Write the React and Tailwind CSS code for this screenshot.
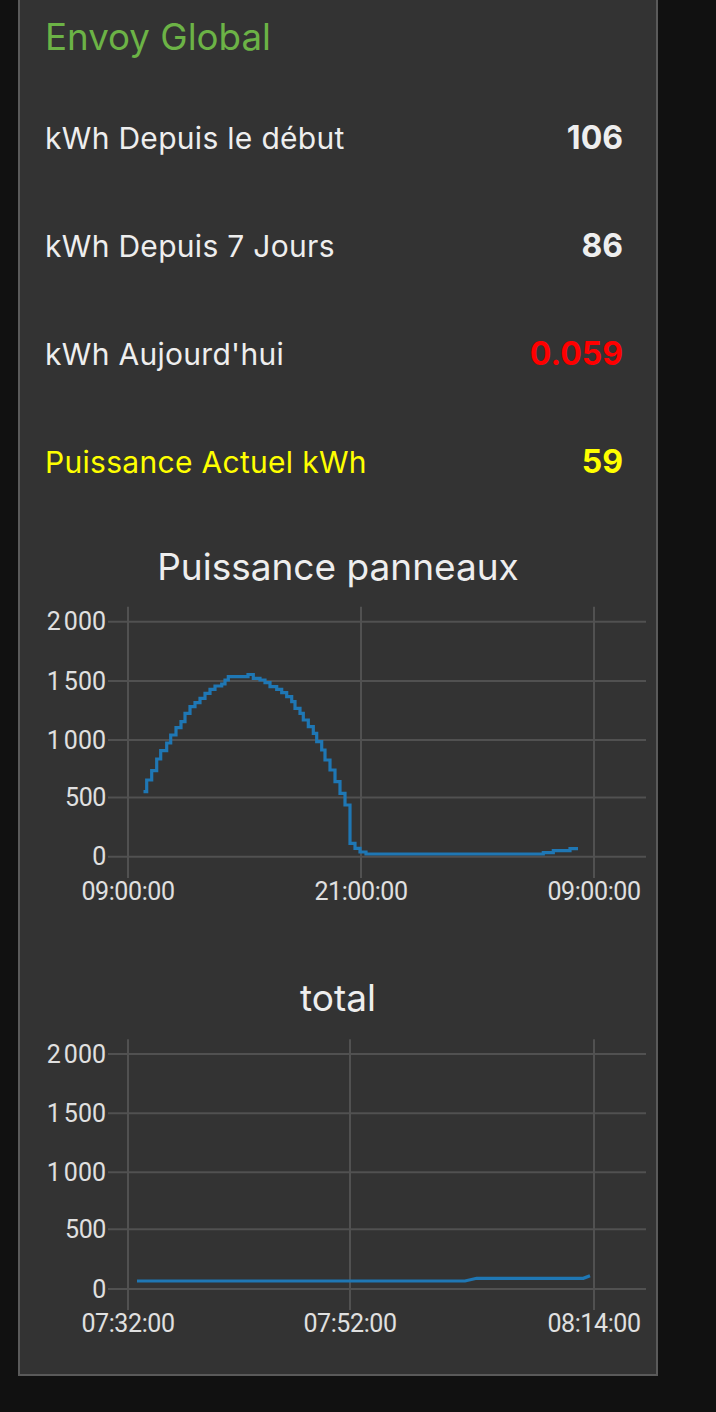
const rows = [
  { label: "kWh Depuis le début", value: "106", color: "text-[#eeeeee]" },
  { label: "kWh Depuis 7 Jours", value: "86", color: "text-[#eeeeee]" },
  { label: "kWh Aujourd'hui", value: "0.059", color: "text-[#eeeeee]", valueColor: "text-[#ff0000]" },
  { label: "Puissance Actuel kWh", value: "59", color: "text-[#ffff00]", valueColor: "text-[#ffff00]" },
];

// step points for the panel power curve, in page pixels
const solarSteps = [
  [146.7, 780], [151.7, 770.7], [156.7, 759], [160.7, 750.7], [166.7, 743],
  [170.7, 735], [176, 727.7], [181, 721.7], [185, 713.3], [190, 706.7],
  [195, 702.7], [200, 698.3], [205, 693.3], [210, 689.3], [215, 686],
  [221.7, 684], [225, 680], [228.3, 676.7], [248, 674.5], [253.3, 678.3],
  [260, 680], [265, 682.7], [270, 686.7], [276.7, 689.3], [281.7, 692.7],
  [286.7, 696.7], [291.7, 701.7], [295, 708.3], [300, 713.3], [303.3, 720],
  [308.3, 726.7], [313.3, 733.3], [316.7, 741.7], [321.7, 750], [325, 760],
  [330, 770], [335, 781.7], [340, 793.3], [345, 805], [350, 843.3],
  [355, 848.3], [360, 852], [366, 854], [543.3, 852.7], [553.3, 850.7],
  [570, 848.7],
];

const solarPath =
  "M143.5 791.7 " + solarSteps.map(([x, y]) => `H${x} V${y}`).join(" ") + " H578";

function Chart({ top, height, grid, xs, xLabels, yLabels, lineTop, lineBottom, path }) {
  return (
    <svg
      width="636"
      height={height}
      viewBox={`20 ${top} 636 ${height}`}
      className="block"
      style={{ fontFamily: "Roboto, 'Liberation Sans', sans-serif" }}
    >
      {grid.map((y) => (
        <line key={y} x1="108" x2="646" y1={y} y2={y} stroke="#515151" strokeWidth="2" />
      ))}
      {xs.map((x) => (
        <line key={x} x1={x} x2={x} y1={lineTop} y2={lineBottom} stroke="#515151" strokeWidth="2" />
      ))}
      {grid.map((y, i) => (
        <text
          key={y}
          x="106"
          y={y}
          textAnchor="end"
          dominantBaseline="central"
          fill="#e0e0e0"
          fontSize="25"
          letterSpacing="-0.4"
        >
          {yLabels[i]}
        </text>
      ))}
      {xs.map((x, i) => (
        <text
          key={x}
          x={x}
          y={lineBottom + 13}
          textAnchor="middle"
          dominantBaseline="central"
          fill="#e0e0e0"
          fontSize="25"
          letterSpacing="-0.4"
        >
          {xLabels[i]}
        </text>
      ))}
      <path d={path} fill="none" stroke="#1f77b4" strokeWidth="3.2" strokeLinejoin="miter" />
    </svg>
  );
}

const yLabels = ["2\u202f000", "1\u202f500", "1\u202f000", "500", "0"];

export default function App() {
  return (
    <div className="min-h-screen bg-[#111111]" style={{ fontFamily: "Inter, 'Noto Sans', sans-serif" }}>
      <div className="ml-[18px] w-[640px] border-2 border-t-0 border-[#5a5a5a] bg-[#333333] pb-[34px]">
        <div className="flex h-[74px] items-center pl-[25px] text-[36.7px] text-[#6cb346]">Envoy Global</div>

        <div className="mt-[10px]">
          {rows.map((r) => (
            <div key={r.label} className="flex h-[108px] items-center justify-between pl-[25px] pr-[33px]">
              <span className={`text-[30px] tracking-[0.3px] ${r.color}`}>{r.label}</span>
              <span className={`text-[32px] font-bold ${r.valueColor || "text-[#eeeeee]"}`}>{r.value}</span>
            </div>
          ))}
        </div>

        <div className="mt-[26px] flex h-[50px] items-center justify-center text-[37px] text-[#eeeeee]">
          Puissance panneaux
        </div>
        <Chart
          top={592}
          height={318}
          grid={[621.7, 681, 740, 797.5, 856.7]}
          xs={[128, 361, 594]}
          xLabels={["09:00:00", "21:00:00", "09:00:00"]}
          yLabels={yLabels}
          lineTop={606.7}
          lineBottom={878}
          path={solarPath}
        />

        <div className="mt-[63px] flex h-[50px] items-center justify-center text-[37px] text-[#eeeeee]">total</div>
        <Chart
          top={1023}
          height={317}
          grid={[1054, 1113.3, 1172.3, 1229.3, 1289]}
          xs={[128, 350, 594]}
          xLabels={["07:32:00", "07:52:00", "08:14:00"]}
          yLabels={yLabels}
          lineTop={1039.3}
          lineBottom={1310}
          path="M137 1281 H465 L476.7 1278.3 H583.3 L590 1275.7"
        />
      </div>
    </div>
  );
}
